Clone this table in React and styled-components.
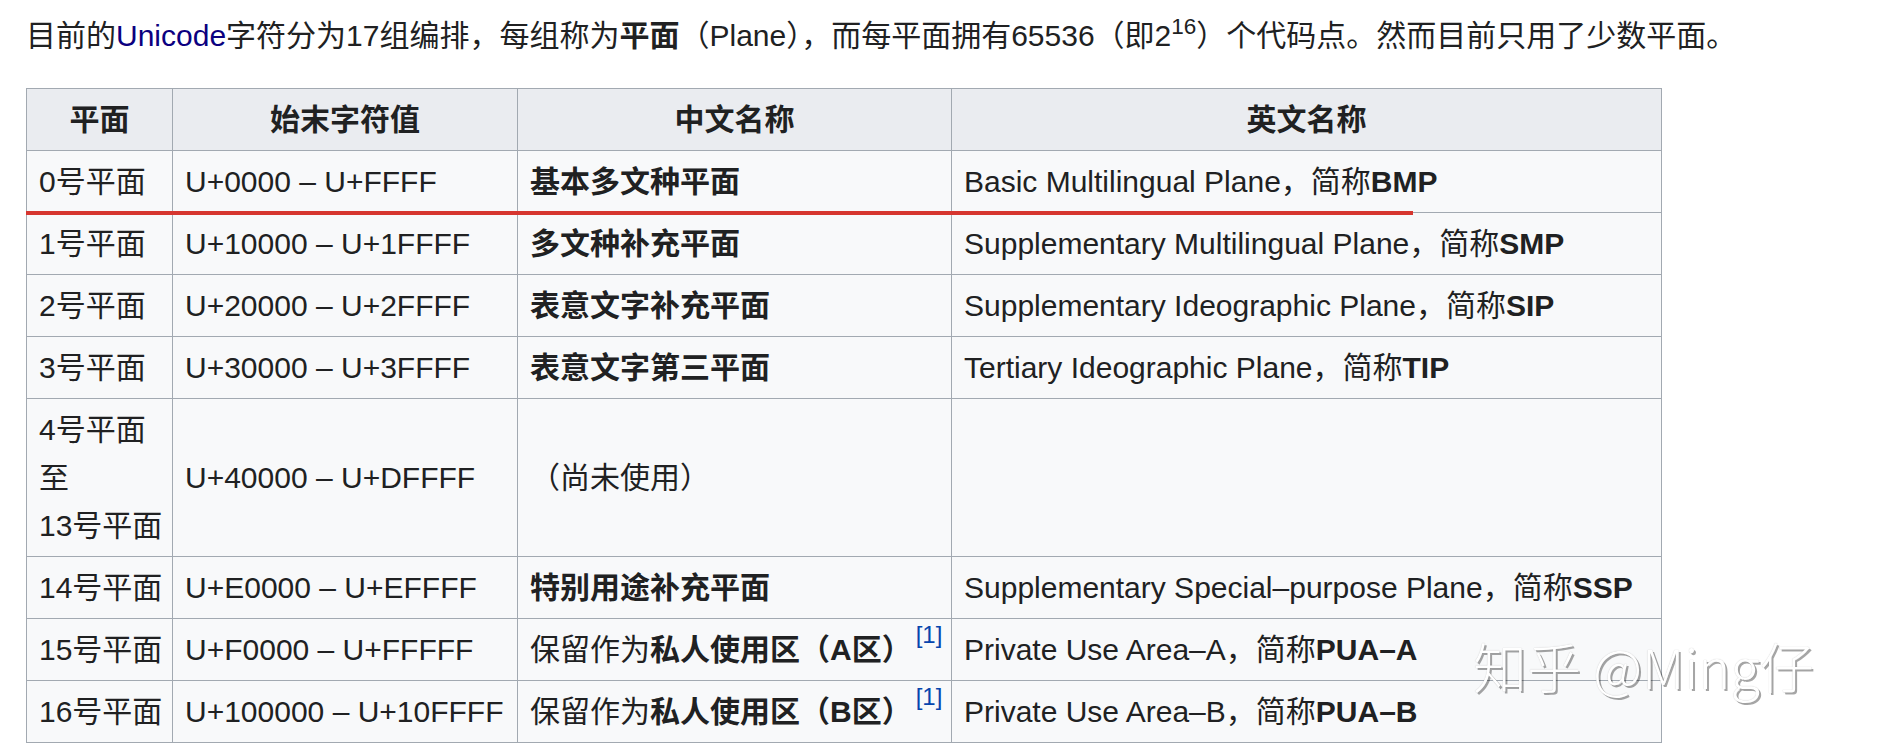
import React from "react";
import styled, { createGlobalStyle } from "styled-components";

const GlobalStyle = createGlobalStyle`
  body {
    margin: 0;
    background: #ffffff;
    color: #202122;
    font-family: "Liberation Sans", Arial, "Noto Sans CJK SC", sans-serif;
  }
`;

const Page = styled.div`
  position: relative;
  padding: 12px 0 0 26px;
  font-size: 30px;
  line-height: 48px;
`;

const Intro = styled.p`
  margin: 0;
  white-space: nowrap;
`;

const Link = styled.a`
  color: #0b0080;
  text-decoration: none;
`;

const Sup = styled.sup`
  font-size: 75%;
  line-height: 0;
  vertical-align: 0.55em;
`;

const TableWrap = styled.div`
  position: relative;
  margin-top: 28px;
  width: 1635px;
`;

const Table = styled.table`
  border-collapse: collapse;
  table-layout: fixed;
  width: 1635px;
  background: #f8f9fa;
  color: #202122;
`;

const Col = styled.col`
  width: ${(p) => p.$w}px;
`;

const Th = styled.th`
  background: #eaecf0;
  border: 1px solid #a2a9b1;
  padding: 6.5px 12px;
  font-weight: 700;
  text-align: center;
  white-space: nowrap;
`;

const Td = styled.td`
  border: 1px solid #a2a9b1;
  padding: 6.5px 12px;
  text-align: left;
  vertical-align: middle;
  white-space: nowrap;
`;

const Ref = styled.sup`
  color: #0645ad;
  font-size: 80%;
  line-height: 0;
  vertical-align: 0.7em;
  margin-left: 4px;
`;

const Highlight = styled.div`
  position: absolute;
  left: 0;
  top: 123px;
  width: 1387px;
  height: 4px;
  background: #d6362f;
`;

const Watermark = styled.div`
  position: absolute;
  left: 1473px;
  top: 636px;
  font-family: "Noto Sans CJK SC", "Noto Sans", sans-serif;
  font-weight: 300;
  font-size: 54px;
  line-height: 60px;
  color: #ffffff;
  text-shadow: 2px 2px 0 rgba(0, 0, 0, 0.35), 0 0 1px rgba(0, 0, 0, 0.25);
  white-space: nowrap;
`;

const rows = [
  ["0号平面", "U+0000 – U+FFFF", <b>基本多文种平面</b>, <>Basic Multilingual Plane，简称<b>BMP</b></>],
  ["1号平面", "U+10000 – U+1FFFF", <b>多文种补充平面</b>, <>Supplementary Multilingual Plane，简称<b>SMP</b></>],
  ["2号平面", "U+20000 – U+2FFFF", <b>表意文字补充平面</b>, <>Supplementary Ideographic Plane，简称<b>SIP</b></>],
  ["3号平面", "U+30000 – U+3FFFF", <b>表意文字第三平面</b>, <>Tertiary Ideographic Plane，简称<b>TIP</b></>],
  [<>4号平面<br />至<br />13号平面</>, "U+40000 – U+DFFFF", "（尚未使用）", ""],
  ["14号平面", "U+E0000 – U+EFFFF", <b>特别用途补充平面</b>, <>Supplementary Special–purpose Plane，简称<b>SSP</b></>],
  ["15号平面", "U+F0000 – U+FFFFF", <>保留作为<b>私人使用区（A区）</b><Ref>[1]</Ref></>, <>Private Use Area–A，简称<b>PUA–A</b></>],
  ["16号平面", "U+100000 – U+10FFFF", <>保留作为<b>私人使用区（B区）</b><Ref>[1]</Ref></>, <>Private Use Area–B，简称<b>PUA–B</b></>],
];

export default function App() {
  return (
    <>
      <GlobalStyle />
      <Page>
        <Intro>
          目前的<Link href="#">Unicode</Link>字符分为17组编排，每组称为<b>平面</b>（Plane），而每平面拥有65536（即2<Sup>16</Sup>）个代码点。然而目前只用了少数平面。
        </Intro>
        <TableWrap>
          <Table>
            <colgroup>
              <Col $w={146} />
              <Col $w={345} />
              <Col $w={434} />
              <Col $w={710} />
            </colgroup>
            <thead>
              <tr>
                <Th>平面</Th>
                <Th>始末字符值</Th>
                <Th>中文名称</Th>
                <Th>英文名称</Th>
              </tr>
            </thead>
            <tbody>
              {rows.map((r, i) => (
                <tr key={i}>
                  <Td>{r[0]}</Td>
                  <Td>{r[1]}</Td>
                  <Td>{r[2]}</Td>
                  <Td>{r[3]}</Td>
                </tr>
              ))}
            </tbody>
          </Table>
          <Highlight />
        </TableWrap>
        <Watermark>知乎 @Ming仔</Watermark>
      </Page>
    </>
  );
}
